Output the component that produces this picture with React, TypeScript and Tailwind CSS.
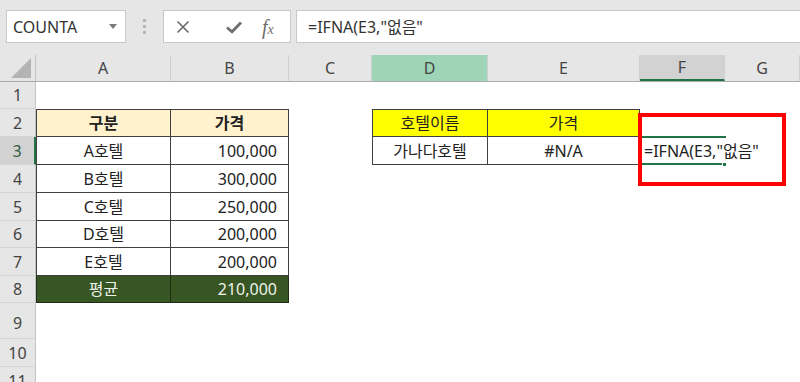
import { ReactNode } from "react";

type CellSpec = { text?: ReactNode; cls?: string };

const COLS = ["A", "B", "C", "D", "E", "F", "G"];

const grid = "grid grid-cols-[36px_135px_118px_83px_116px_152px_85px_75px]";

const line = "border-[#404040]";
const hdr = `bg-[#fff2cc] font-bold justify-center border-t border-b border-r ${line}`;
const yel = `bg-[#ffff00] justify-center border-t border-b border-r ${line}`;
const txt = `justify-center border-b border-r ${line}`;
const num = `justify-end pr-[11px] border-b border-r ${line}`;
const avg = "bg-[#375623] text-[#eef2ea] border-b border-r border-[#1e2e14]";

const rows: { n: number; h: string; cells: CellSpec[]; active?: boolean }[] = [
  { n: 1, h: "h-[27px]", cells: [] },
  {
    n: 2,
    h: "h-[28px]",
    cells: [
      { text: "구분", cls: `${hdr} border-l` },
      { text: "가격", cls: hdr },
      {},
      { text: "호텔이름", cls: `${yel} border-l` },
      { text: "가격", cls: yel },
    ],
  },
  {
    n: 3,
    h: "h-[28px]",
    active: true,
    cells: [
      { text: "A호텔", cls: `${txt} border-l` },
      { text: "100,000", cls: num },
      {},
      { text: "가나다호텔", cls: `${txt} border-l` },
      { text: "#N/A", cls: txt },
    ],
  },
  {
    n: 4,
    h: "h-[28px]",
    cells: [
      { text: "B호텔", cls: `${txt} border-l` },
      { text: "300,000", cls: num },
    ],
  },
  {
    n: 5,
    h: "h-[28px]",
    cells: [
      { text: "C호텔", cls: `${txt} border-l` },
      { text: "250,000", cls: num },
    ],
  },
  {
    n: 6,
    h: "h-[27px]",
    cells: [
      { text: "D호텔", cls: `${txt} border-l` },
      { text: "200,000", cls: num },
    ],
  },
  {
    n: 7,
    h: "h-[28px]",
    cells: [
      { text: "E호텔", cls: `${txt} border-l` },
      { text: "200,000", cls: num },
    ],
  },
  {
    n: 8,
    h: "h-[27px]",
    cells: [
      { text: "평균", cls: `${avg} justify-center border-l` },
      { text: "210,000", cls: `${avg} justify-end pr-[11px]` },
    ],
  },
  { n: 9, h: "h-[36px]", cells: [] },
  { n: 10, h: "h-[28px]", cells: [] },
  { n: 11, h: "h-[28px]", cells: [] },
];

function FormulaButtons() {
  return (
    <div className="ml-[17px] w-[128px] h-[33px] bg-white border border-[#c8c8c8] flex items-center pl-[11px]">
      <svg width="16" height="16" viewBox="0 0 16 16">
        <path d="M2.5 2.5 L13.5 13.5 M13.5 2.5 L2.5 13.5" stroke="#6e6e6e" strokeWidth="1.7" />
      </svg>
      <svg className="ml-[34px]" width="18" height="16" viewBox="0 0 18 16">
        <path d="M2 8.5 L7 12.8 L16 3.5" stroke="#6e6e6e" strokeWidth="2.8" fill="none" />
      </svg>
      <span className="ml-[19px] text-[20px] italic text-[#6e6e6e] font-['Liberation_Serif',serif] leading-none">
        f<span className="text-[14px]">x</span>
      </span>
    </div>
  );
}

export default function App() {
  return (
    <div className="relative w-[800px] h-[382px] overflow-hidden bg-white font-['Noto_Sans','Noto_Sans_CJK_KR',sans-serif] text-[16px] text-[#222]">
      {/* formula bar */}
      <div className="h-[55px] bg-[#e6e6e6] flex items-start pt-[10px]">
        <div className="ml-[6px] w-[120px] h-[33px] bg-white border border-[#c8c8c8] flex items-center pl-[6px] pr-[8px]">
          <span className="flex-1 text-[16px] text-[#333]">COUNTA</span>
          <svg width="8" height="5" viewBox="0 0 8 5">
            <path d="M0 0 L8 0 L4 5 Z" fill="#7a7a7a" />
          </svg>
        </div>
        <div className="ml-[17px] h-[33px] flex flex-col justify-center gap-[3px]">
          <span className="w-[3px] h-[3px] bg-[#b5b5b5]" />
          <span className="w-[3px] h-[3px] bg-[#b5b5b5]" />
          <span className="w-[3px] h-[3px] bg-[#b5b5b5]" />
        </div>
        <FormulaButtons />
        <div className="ml-[5px] flex-1 h-[33px] bg-white border border-[#c8c8c8] border-r-0 flex items-center pl-[11px] text-[#333]">
          =IFNA(E3,"없음"
        </div>
      </div>

      {/* column headers */}
      <div className={`${grid} h-[27px] bg-[#e6e6e6] border-b border-[#ababab]`}>
        <div className="relative border-r border-[#c4c4c4]">
          <svg className="absolute right-[4px] bottom-[3px]" width="20" height="20" viewBox="0 0 20 20">
            <path d="M20 0 L20 20 L0 20 Z" fill="#b4b4b4" />
          </svg>
        </div>
        {COLS.map((c) => (
          <div
            key={c}
            className={`flex items-center justify-center border-r border-[#d0d0d0] text-[#444] ${
              c === "D" ? "bg-[#9fd5b7] text-[#222]" : ""
            } ${c === "F" ? "bg-[#d2d2d2] text-[#2c5e3f] border-b-2 border-b-[#217346]" : ""}`}
          >
            {c}
          </div>
        ))}
      </div>

      {/* rows */}
      {rows.map((r) => (
        <div key={r.n} className={`${grid} ${r.h}`}>
          <div
            className={`flex justify-center border-b border-[#d4d4d4] ${
              r.n === 9 ? "items-end pb-[3px]" : "items-center"
            } ${
              r.active
                ? "bg-[#d2d2d2] text-[#2c5e3f] border-r-2 border-r-[#217346]"
                : "bg-[#e6e6e6] text-[#444] border-r border-r-[#c4c4c4]"
            }`}
          >
            {r.n}
          </div>
          {COLS.map((c, i) => {
            const cell = r.cells[i] ?? {};
            if (r.active && c === "F") {
              return (
                <div key={c} className="relative flex items-center pl-[4px] whitespace-nowrap z-10">
                  <span className="absolute left-[2px] right-[-1px] top-[-1px] h-[2px] bg-[#217346]" />
                  <span className="absolute left-[2px] right-[3px] bottom-0 h-[2px] bg-[#217346]" />
                  <span className="absolute right-[-2px] bottom-[-2px] w-[5px] h-[5px] bg-[#217346] border border-white" />
                  <span className="text-[#222]">=IFNA(E3,"없음"</span>
                </div>
              );
            }
            return (
              <div key={c} className={`flex items-center whitespace-nowrap ${cell.cls ?? ""}`}>
                {cell.text}
              </div>
            );
          })}
        </div>
      ))}

      {/* highlight box */}
      <div className="absolute left-[638px] top-[113px] w-[148px] h-[73px] border-[4px] border-[#ff0000] z-20" />
    </div>
  );
}
